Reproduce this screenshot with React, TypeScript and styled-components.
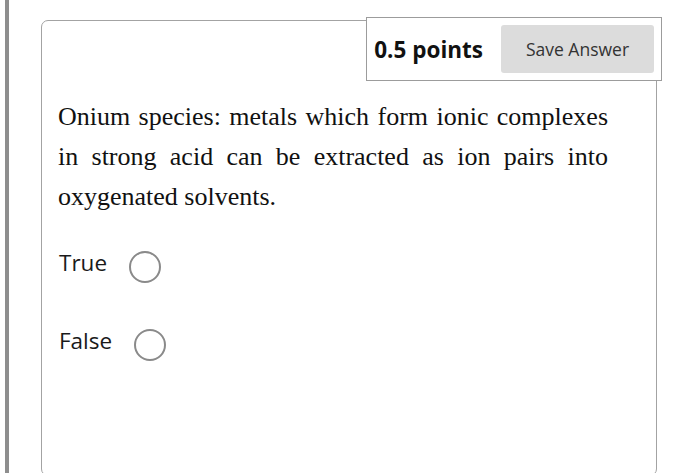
import React from "react";
import styled, { createGlobalStyle } from "styled-components";

const Global = createGlobalStyle`
  html, body { margin: 0; padding: 0; background: #ffffff; }
  body { width: 700px; height: 473px; overflow: hidden; }
`;

const Page = styled.div`
  display: flex;
  height: 473px;
  overflow: hidden;
  background: #ffffff;
`;

const LeftRail = styled.div`
  width: 4px;
  margin-left: 5px;
  background: #8e8e8e;
  flex-shrink: 0;
`;

const Main = styled.main`
  flex: 1;
  padding: 20px 0 0 32px;
`;

const Card = styled.section`
  box-sizing: border-box;
  width: 616px;
  height: 456px;
  border: 1px solid #a3a3a3;
  border-radius: 7px;
  background: #ffffff;
`;

const Header = styled.div`
  display: flex;
  justify-content: flex-end;
  margin: -4px -6px 0 0;
`;

const PointsBox = styled.div`
  box-sizing: border-box;
  display: flex;
  align-items: center;
  gap: 18px;
  height: 64px;
  padding: 7px;
  border: 1px solid #9c9c9c;
  background: #ffffff;
`;

const Points = styled.span`
  font-family: "Open Sans", sans-serif;
  font-weight: 700;
  font-size: 22.5px;
  color: #111111;
  white-space: nowrap;
`;

const SaveButton = styled.button`
  width: 153px;
  height: 48px;
  border: none;
  border-radius: 3px;
  background: #dcdcdc;
  font-family: "Open Sans", sans-serif;
  font-size: 17.5px;
  color: #333333;
  padding: 0;
`;

const Question = styled.p`
  margin: 16px 0 0 16px;
  width: 550px;
  font-family: "Liberation Serif", "Times New Roman", serif;
  font-size: 26px;
  line-height: 40px;
  color: #111111;
  text-align: justify;
`;

const Options = styled.div`
  display: flex;
  flex-direction: column;
  gap: 46px;
  margin: 34px 0 0 17px;
`;

const Option = styled.label`
  display: flex;
  align-items: center;
  height: 32px;
  gap: 22px;
`;

const OptionText = styled.span`
  font-family: "Open Sans", sans-serif;
  font-size: 22.5px;
  color: #1a1a1a;
  margin-bottom: 9px;
`;

const Radio = styled.span`
  box-sizing: border-box;
  width: 32px;
  height: 32px;
  border: 2px solid #8a8a8a;
  border-radius: 50%;
  background: #ffffff;
`;

export default function App() {
  return (
    <>
      <Global />
      <Page>
        <LeftRail />
        <Main>
          <Card>
            <Header>
              <PointsBox>
                <Points>0.5 points</Points>
                <SaveButton>Save Answer</SaveButton>
              </PointsBox>
            </Header>
            <Question>
              Onium species: metals which form ionic complexes in strong acid can be extracted as ion pairs into oxygenated solvents.
            </Question>
            <Options>
              <Option>
                <OptionText>True</OptionText>
                <Radio />
              </Option>
              <Option>
                <OptionText>False</OptionText>
                <Radio />
              </Option>
            </Options>
          </Card>
        </Main>
      </Page>
    </>
  );
}
